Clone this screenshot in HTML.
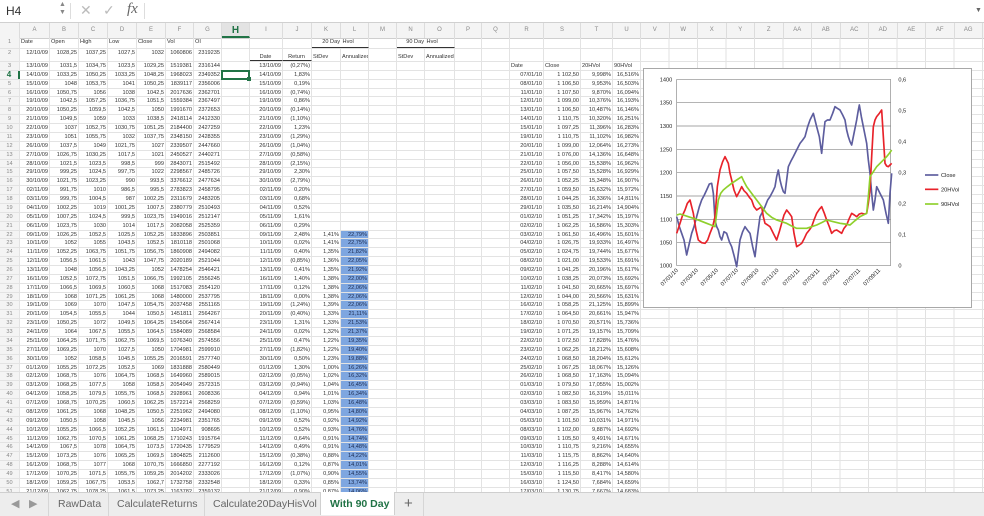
<!DOCTYPE html>
<html><head><meta charset="utf-8"><style>
*{margin:0;padding:0}
body{width:984px;height:515px;overflow:hidden;position:relative;background:#fff;font-family:"Liberation Sans",sans-serif}
.fb{position:absolute;left:0;top:0;width:984px;height:22px;background:#fff;border-bottom:1px solid #d0d0d0}
.hd{position:absolute;left:0;top:23px;width:984px;height:15px;background:#f4f4f4;border-bottom:1px solid #cfcfcf;display:flex}
.hd i{flex:none;font-style:normal;font-size:6px;color:#888;text-align:center;line-height:15px;border-right:1px solid #dcdcdc;box-sizing:border-box}
.vl{position:absolute;left:641px;top:38px;width:343px;height:454px;background:repeating-linear-gradient(to right,transparent 0 27.5px,#e1e1e1 27.5px 28.5px)}
.r{position:absolute;left:0;width:984px;height:8.87px;display:flex;border-bottom:1px solid #e3e3e3;box-sizing:border-box}
.r i{flex:none;font-style:normal;border-right:1px solid #e3e3e3;box-sizing:border-box;overflow:hidden;white-space:nowrap;text-align:right;padding-right:1px;font-size:5.6px;line-height:8px;color:#333}
.r i:first-child,.hd i:first-child{background:#f4f4f4;color:#888;text-align:center;padding:0}
.r i:nth-child(1),.hd i:nth-child(1){width:20px}
.r i:nth-child(2),.hd i:nth-child(2){width:30px}
.r i:nth-child(3),.hd i:nth-child(3),.r i:nth-child(4),.hd i:nth-child(4),.r i:nth-child(5),.hd i:nth-child(5),.r i:nth-child(6),.hd i:nth-child(6){width:29px}
.r i:nth-child(7),.hd i:nth-child(7),.r i:nth-child(8),.hd i:nth-child(8),.r i:nth-child(9),.hd i:nth-child(9){width:28px}
.r i:nth-child(10),.hd i:nth-child(10){width:33px}
.r i:nth-child(11),.hd i:nth-child(11),.r i:nth-child(12),.hd i:nth-child(12){width:29px}
.r i:nth-child(13),.hd i:nth-child(13),.r i:nth-child(14),.hd i:nth-child(14),.r i:nth-child(15),.hd i:nth-child(15){width:28px}
.r i:nth-child(16),.hd i:nth-child(16){width:30px}
.r i:nth-child(17),.hd i:nth-child(17){width:27px}
.r i:nth-child(18),.hd i:nth-child(18){width:28px}
.r i:nth-child(19),.hd i:nth-child(19){width:34px}
.r i:nth-child(20),.hd i:nth-child(20){width:37px}
.r i:nth-child(21),.hd i:nth-child(21){width:32px}
.r i:nth-child(22),.hd i:nth-child(22){width:28px}
.hd i.x{width:28.5px}
.v i:nth-child(13){background:#7ea6e0;color:#1a2a50}
.L{text-align:left!important;padding-left:1px}
.sel{position:absolute;left:221px;top:70px;width:29px;height:10px;border:2px solid #217346;box-sizing:border-box}
.tabs{position:absolute;left:0;top:492px;width:984px;height:23px;background:#ededed;border-top:1px solid #cfcfcf;font-size:10.5px;color:#666}
.tabs span{position:absolute;top:5px;white-space:nowrap}
</style></head><body>
<div class="fb">
<span style="position:absolute;left:6px;top:4px;font-size:12px;color:#333">H4</span>
<span style="position:absolute;left:59px;top:1px;font-size:7px;color:#888;line-height:8px">▲<br>▼</span>
<span style="position:absolute;left:70px;top:3px;width:1px;height:16px;background:#ddd"></span>
<span style="position:absolute;left:80px;top:2px;font-size:14px;color:#bbb">✕</span>
<span style="position:absolute;left:103px;top:2px;font-size:14px;color:#bbb">✓</span>
<span style="position:absolute;left:127px;top:1px;font-size:15px;color:#666;font-family:'Liberation Serif',serif;font-style:italic">fx</span>
<span style="position:absolute;left:144px;top:3px;width:1px;height:16px;background:#ddd"></span>
<span style="position:absolute;left:975px;top:7px;font-size:7px;color:#666">▼</span>
</div>
<div class="hd"><i></i><i>A</i><i>B</i><i>C</i><i>D</i><i>E</i><i>F</i><i>G</i><i style="color:#217346;font-weight:bold;font-size:10px;background:#e3e3e3;border-bottom:2px solid #217346">H</i><i>I</i><i>J</i><i>K</i><i>L</i><i>M</i><i>N</i><i>O</i><i>P</i><i>Q</i><i>R</i><i>S</i><i>T</i><i>U</i><i class="x">V</i><i class="x">W</i><i class="x">X</i><i class="x">Y</i><i class="x">Z</i><i class="x">AA</i><i class="x">AB</i><i class="x">AC</i><i class="x">AD</i><i class="x">AE</i><i class="x">AF</i><i class="x">AG</i></div>
<div class="vl"></div>

<div class="r" style="top:38px;height:11px"><i>1</i><i class="L">Date</i><i class="L">Open</i><i class="L">High</i><i class="L">Low</i><i class="L">Close</i><i class="L">Vol</i><i class="L">OI</i><i></i><i></i><i></i><i style="text-align:right;overflow:visible;border-right:none;border-bottom:1px solid #333">20 Day</i><i style="text-align:left;border-bottom:1px solid #333">&nbsp;Hvol</i><i></i><i style="text-align:right;overflow:visible;border-right:none;border-bottom:1px solid #333">90 Day</i><i style="text-align:left;border-bottom:1px solid #333">&nbsp;Hvol</i><i></i><i></i><i></i><i></i><i></i><i></i></div>
<div class="r" style="top:49px;height:13px"><i>2</i><i>12/10/09</i><i>1028,25</i><i>1037,25</i><i>1027,5</i><i>1032</i><i>1060806</i><i>2319235</i><i></i><i style="text-align:center;border-bottom:1px solid #333;line-height:16px">Date</i><i style="text-align:center;border-bottom:1px solid #333;line-height:16px">Return</i><i class="L" style="line-height:16px">StDev</i><i class="L" style="line-height:16px">Annualized</i><i></i><i class="L" style="line-height:16px">StDev</i><i class="L" style="line-height:16px">Annualized</i><i></i><i></i><i></i><i></i><i></i><i></i></div>
<div class="r" style="top:62px"><i>3</i><i>13/10/09</i><i>1031,5</i><i>1034,75</i><i>1023,5</i><i>1029,25</i><i>1519381</i><i>2316144</i><i></i><i>13/10/09</i><i>(0,27%)</i><i></i><i></i><i></i><i></i><i></i><i></i><i></i><i class="L">Date</i><i class="L">Close</i><i class="L">20HVol</i><i class="L">90HVol</i></div>
<div class="r" style="top:70.87px"><i style="color:#217346;font-weight:bold;font-size:8px;border-right:2px solid #217346">4</i><i>14/10/09</i><i>1033,25</i><i>1050,25</i><i>1033,25</i><i>1048,25</i><i>1968023</i><i>2349352</i><i></i><i>14/10/09</i><i>1,83%</i><i></i><i></i><i></i><i></i><i></i><i></i><i></i><i>07/01/10</i><i>1 102,50</i><i>9,998%</i><i>16,516%</i></div>
<div class="r" style="top:79.74px"><i>5</i><i>15/10/09</i><i>1048</i><i>1053,75</i><i>1041</i><i>1050,25</i><i>1839117</i><i>2356006</i><i></i><i>15/10/09</i><i>0,19%</i><i></i><i></i><i></i><i></i><i></i><i></i><i></i><i>08/01/10</i><i>1 106,50</i><i>9,953%</i><i>16,503%</i></div>
<div class="r" style="top:88.61px"><i>6</i><i>16/10/09</i><i>1050,75</i><i>1056</i><i>1038</i><i>1042,5</i><i>2017636</i><i>2362701</i><i></i><i>16/10/09</i><i>(0,74%)</i><i></i><i></i><i></i><i></i><i></i><i></i><i></i><i>11/01/10</i><i>1 107,50</i><i>9,870%</i><i>16,094%</i></div>
<div class="r" style="top:97.48px"><i>7</i><i>19/10/09</i><i>1042,5</i><i>1057,25</i><i>1036,75</i><i>1051,5</i><i>1559384</i><i>2367497</i><i></i><i>19/10/09</i><i>0,86%</i><i></i><i></i><i></i><i></i><i></i><i></i><i></i><i>12/01/10</i><i>1 099,00</i><i>10,376%</i><i>16,193%</i></div>
<div class="r" style="top:106.35px"><i>8</i><i>20/10/09</i><i>1050,25</i><i>1059,5</i><i>1042,5</i><i>1050</i><i>1991670</i><i>2372653</i><i></i><i>20/10/09</i><i>(0,14%)</i><i></i><i></i><i></i><i></i><i></i><i></i><i></i><i>13/01/10</i><i>1 106,50</i><i>10,487%</i><i>16,146%</i></div>
<div class="r" style="top:115.22px"><i>9</i><i>21/10/09</i><i>1049,5</i><i>1059</i><i>1033</i><i>1038,5</i><i>2418114</i><i>2412330</i><i></i><i>21/10/09</i><i>(1,10%)</i><i></i><i></i><i></i><i></i><i></i><i></i><i></i><i>14/01/10</i><i>1 110,75</i><i>10,320%</i><i>16,251%</i></div>
<div class="r" style="top:124.09px"><i>10</i><i>22/10/09</i><i>1037</i><i>1052,75</i><i>1030,75</i><i>1051,25</i><i>2184400</i><i>2427259</i><i></i><i>22/10/09</i><i>1,23%</i><i></i><i></i><i></i><i></i><i></i><i></i><i></i><i>15/01/10</i><i>1 097,25</i><i>11,396%</i><i>16,283%</i></div>
<div class="r" style="top:132.96px"><i>11</i><i>23/10/09</i><i>1051</i><i>1055,75</i><i>1032</i><i>1037,75</i><i>2348150</i><i>2428355</i><i></i><i>23/10/09</i><i>(1,29%)</i><i></i><i></i><i></i><i></i><i></i><i></i><i></i><i>19/01/10</i><i>1 110,75</i><i>11,102%</i><i>16,982%</i></div>
<div class="r" style="top:141.83px"><i>12</i><i>26/10/09</i><i>1037,5</i><i>1049</i><i>1021,75</i><i>1027</i><i>2339507</i><i>2447660</i><i></i><i>26/10/09</i><i>(1,04%)</i><i></i><i></i><i></i><i></i><i></i><i></i><i></i><i>20/01/10</i><i>1 099,00</i><i>12,064%</i><i>16,273%</i></div>
<div class="r" style="top:150.70px"><i>13</i><i>27/10/09</i><i>1026,75</i><i>1030,25</i><i>1017,5</i><i>1021</i><i>2450527</i><i>2440271</i><i></i><i>27/10/09</i><i>(0,58%)</i><i></i><i></i><i></i><i></i><i></i><i></i><i></i><i>21/01/10</i><i>1 076,00</i><i>14,136%</i><i>16,648%</i></div>
<div class="r" style="top:159.57px"><i>14</i><i>28/10/09</i><i>1021,5</i><i>1023,5</i><i>998,5</i><i>999</i><i>2843071</i><i>2515492</i><i></i><i>28/10/09</i><i>(2,15%)</i><i></i><i></i><i></i><i></i><i></i><i></i><i></i><i>22/01/10</i><i>1 056,00</i><i>15,538%</i><i>16,962%</i></div>
<div class="r" style="top:168.44px"><i>15</i><i>29/10/09</i><i>999,25</i><i>1024,5</i><i>997,75</i><i>1022</i><i>2298567</i><i>2485726</i><i></i><i>29/10/09</i><i>2,30%</i><i></i><i></i><i></i><i></i><i></i><i></i><i></i><i>25/01/10</i><i>1 057,50</i><i>15,528%</i><i>16,929%</i></div>
<div class="r" style="top:177.31px"><i>16</i><i>30/10/09</i><i>1021,75</i><i>1023,25</i><i>990</i><i>993,5</i><i>3376612</i><i>2477634</i><i></i><i>30/10/09</i><i>(2,79%)</i><i></i><i></i><i></i><i></i><i></i><i></i><i></i><i>26/01/10</i><i>1 052,25</i><i>15,348%</i><i>16,907%</i></div>
<div class="r" style="top:186.18px"><i>17</i><i>02/11/09</i><i>991,75</i><i>1010</i><i>986,5</i><i>995,5</i><i>2783823</i><i>2458795</i><i></i><i>02/11/09</i><i>0,20%</i><i></i><i></i><i></i><i></i><i></i><i></i><i></i><i>27/01/10</i><i>1 059,50</i><i>15,632%</i><i>15,972%</i></div>
<div class="r" style="top:195.05px"><i>18</i><i>03/11/09</i><i>999,75</i><i>1004,5</i><i>987</i><i>1002,25</i><i>2311679</i><i>2483205</i><i></i><i>03/11/09</i><i>0,68%</i><i></i><i></i><i></i><i></i><i></i><i></i><i></i><i>28/01/10</i><i>1 044,25</i><i>16,336%</i><i>14,811%</i></div>
<div class="r" style="top:203.92px"><i>19</i><i>04/11/09</i><i>1002,25</i><i>1019</i><i>1001,25</i><i>1007,5</i><i>2380779</i><i>2510493</i><i></i><i>04/11/09</i><i>0,52%</i><i></i><i></i><i></i><i></i><i></i><i></i><i></i><i>29/01/10</i><i>1 035,50</i><i>16,214%</i><i>14,904%</i></div>
<div class="r" style="top:212.79px"><i>20</i><i>05/11/09</i><i>1007,25</i><i>1024,5</i><i>999,5</i><i>1023,75</i><i>1949016</i><i>2512147</i><i></i><i>05/11/09</i><i>1,61%</i><i></i><i></i><i></i><i></i><i></i><i></i><i></i><i>01/02/10</i><i>1 051,25</i><i>17,342%</i><i>15,197%</i></div>
<div class="r" style="top:221.66px"><i>21</i><i>06/11/09</i><i>1023,75</i><i>1030</i><i>1014</i><i>1017,5</i><i>2082058</i><i>2525359</i><i></i><i>06/11/09</i><i>0,29%</i><i></i><i></i><i></i><i></i><i></i><i></i><i></i><i>02/02/10</i><i>1 062,25</i><i>16,586%</i><i>15,303%</i></div>
<div class="r v" style="top:230.53px"><i>22</i><i>09/11/09</i><i>1026,25</i><i>1052,5</i><i>1025,5</i><i>1052,25</i><i>1833896</i><i>2503851</i><i></i><i>09/11/09</i><i>2,48%</i><i>1,41%</i><i>22,79%</i><i></i><i></i><i></i><i></i><i></i><i>03/02/10</i><i>1 061,50</i><i>16,496%</i><i>15,601%</i></div>
<div class="r v" style="top:239.40px"><i>23</i><i>10/11/09</i><i>1052</i><i>1055</i><i>1043,5</i><i>1052,5</i><i>1810118</i><i>2501068</i><i></i><i>10/11/09</i><i>0,02%</i><i>1,41%</i><i>22,75%</i><i></i><i></i><i></i><i></i><i></i><i>04/02/10</i><i>1 026,75</i><i>19,933%</i><i>16,497%</i></div>
<div class="r v" style="top:248.27px"><i>24</i><i>11/11/09</i><i>1052,25</i><i>1063,75</i><i>1051,75</i><i>1056,75</i><i>1860908</i><i>2494082</i><i></i><i>11/11/09</i><i>0,40%</i><i>1,35%</i><i>21,82%</i><i></i><i></i><i></i><i></i><i></i><i>05/02/10</i><i>1 024,75</i><i>19,744%</i><i>15,677%</i></div>
<div class="r v" style="top:257.14px"><i>25</i><i>12/11/09</i><i>1056,5</i><i>1061,5</i><i>1043</i><i>1047,75</i><i>2020189</i><i>2521044</i><i></i><i>12/11/09</i><i>(0,85%)</i><i>1,36%</i><i>22,05%</i><i></i><i></i><i></i><i></i><i></i><i>08/02/10</i><i>1 021,00</i><i>19,533%</i><i>15,691%</i></div>
<div class="r v" style="top:266.01px"><i>26</i><i>13/11/09</i><i>1048</i><i>1056,5</i><i>1043,25</i><i>1052</i><i>1478254</i><i>2546421</i><i></i><i>13/11/09</i><i>0,41%</i><i>1,35%</i><i>21,92%</i><i></i><i></i><i></i><i></i><i></i><i>09/02/10</i><i>1 041,25</i><i>20,196%</i><i>15,617%</i></div>
<div class="r v" style="top:274.88px"><i>27</i><i>16/11/09</i><i>1052,5</i><i>1072,75</i><i>1051,5</i><i>1066,75</i><i>1992105</i><i>2556245</i><i></i><i>16/11/09</i><i>1,40%</i><i>1,38%</i><i>22,00%</i><i></i><i></i><i></i><i></i><i></i><i>10/02/10</i><i>1 038,25</i><i>20,073%</i><i>15,692%</i></div>
<div class="r v" style="top:283.75px"><i>28</i><i>17/11/09</i><i>1066,5</i><i>1069,5</i><i>1060,5</i><i>1068</i><i>1517083</i><i>2554120</i><i></i><i>17/11/09</i><i>0,12%</i><i>1,38%</i><i>22,06%</i><i></i><i></i><i></i><i></i><i></i><i>11/02/10</i><i>1 041,50</i><i>20,665%</i><i>15,697%</i></div>
<div class="r v" style="top:292.62px"><i>29</i><i>18/11/09</i><i>1068</i><i>1071,25</i><i>1061,25</i><i>1068</i><i>1480000</i><i>2537795</i><i></i><i>18/11/09</i><i>0,00%</i><i>1,38%</i><i>22,06%</i><i></i><i></i><i></i><i></i><i></i><i>12/02/10</i><i>1 044,00</i><i>20,566%</i><i>15,631%</i></div>
<div class="r v" style="top:301.49px"><i>30</i><i>19/11/09</i><i>1069</i><i>1070</i><i>1047,5</i><i>1054,75</i><i>2037458</i><i>2551165</i><i></i><i>19/11/09</i><i>(1,24%)</i><i>1,39%</i><i>22,06%</i><i></i><i></i><i></i><i></i><i></i><i>16/02/10</i><i>1 058,25</i><i>21,125%</i><i>15,899%</i></div>
<div class="r v" style="top:310.36px"><i>31</i><i>20/11/09</i><i>1054,5</i><i>1055,5</i><i>1044</i><i>1050,5</i><i>1451811</i><i>2564267</i><i></i><i>20/11/09</i><i>(0,40%)</i><i>1,33%</i><i>21,11%</i><i></i><i></i><i></i><i></i><i></i><i>17/02/10</i><i>1 064,50</i><i>20,661%</i><i>15,947%</i></div>
<div class="r v" style="top:319.23px"><i>32</i><i>23/11/09</i><i>1050,25</i><i>1072</i><i>1049,5</i><i>1064,25</i><i>1545064</i><i>2567414</i><i></i><i>23/11/09</i><i>1,31%</i><i>1,33%</i><i>21,53%</i><i></i><i></i><i></i><i></i><i></i><i>18/02/10</i><i>1 070,50</i><i>20,571%</i><i>15,736%</i></div>
<div class="r v" style="top:328.10px"><i>33</i><i>24/11/09</i><i>1064</i><i>1067,5</i><i>1055,5</i><i>1064,5</i><i>1584089</i><i>2568584</i><i></i><i>24/11/09</i><i>0,02%</i><i>1,32%</i><i>21,37%</i><i></i><i></i><i></i><i></i><i></i><i>19/02/10</i><i>1 071,25</i><i>19,157%</i><i>15,709%</i></div>
<div class="r v" style="top:336.97px"><i>34</i><i>25/11/09</i><i>1064,25</i><i>1071,75</i><i>1062,75</i><i>1069,5</i><i>1076340</i><i>2574556</i><i></i><i>25/11/09</i><i>0,47%</i><i>1,22%</i><i>19,35%</i><i></i><i></i><i></i><i></i><i></i><i>22/02/10</i><i>1 072,50</i><i>17,828%</i><i>15,476%</i></div>
<div class="r v" style="top:345.84px"><i>35</i><i>27/11/09</i><i>1069,25</i><i>1070</i><i>1027,5</i><i>1050</i><i>1704981</i><i>2599910</i><i></i><i>27/11/09</i><i>(1,82%)</i><i>1,22%</i><i>19,40%</i><i></i><i></i><i></i><i></i><i></i><i>23/02/10</i><i>1 062,25</i><i>18,212%</i><i>15,608%</i></div>
<div class="r v" style="top:354.71px"><i>36</i><i>30/11/09</i><i>1052</i><i>1058,5</i><i>1045,5</i><i>1055,25</i><i>2016591</i><i>2577740</i><i></i><i>30/11/09</i><i>0,50%</i><i>1,23%</i><i>19,88%</i><i></i><i></i><i></i><i></i><i></i><i>24/02/10</i><i>1 068,50</i><i>18,204%</i><i>15,612%</i></div>
<div class="r v" style="top:363.58px"><i>37</i><i>01/12/09</i><i>1055,25</i><i>1072,25</i><i>1052,5</i><i>1069</i><i>1831888</i><i>2580449</i><i></i><i>01/12/09</i><i>1,30%</i><i>1,00%</i><i>16,26%</i><i></i><i></i><i></i><i></i><i></i><i>25/02/10</i><i>1 067,25</i><i>18,067%</i><i>15,126%</i></div>
<div class="r v" style="top:372.45px"><i>38</i><i>02/12/09</i><i>1068,75</i><i>1076</i><i>1064,75</i><i>1068,5</i><i>1649960</i><i>2589015</i><i></i><i>02/12/09</i><i>(0,05%)</i><i>1,02%</i><i>16,32%</i><i></i><i></i><i></i><i></i><i></i><i>26/02/10</i><i>1 068,50</i><i>17,163%</i><i>15,094%</i></div>
<div class="r v" style="top:381.32px"><i>39</i><i>03/12/09</i><i>1068,25</i><i>1077,5</i><i>1058</i><i>1058,5</i><i>2054949</i><i>2572315</i><i></i><i>03/12/09</i><i>(0,94%)</i><i>1,04%</i><i>16,45%</i><i></i><i></i><i></i><i></i><i></i><i>01/03/10</i><i>1 079,50</i><i>17,055%</i><i>15,002%</i></div>
<div class="r v" style="top:390.19px"><i>40</i><i>04/12/09</i><i>1058,25</i><i>1079,5</i><i>1055,75</i><i>1068,5</i><i>2928961</i><i>2608336</i><i></i><i>04/12/09</i><i>0,94%</i><i>1,01%</i><i>16,34%</i><i></i><i></i><i></i><i></i><i></i><i>02/03/10</i><i>1 082,50</i><i>16,319%</i><i>15,011%</i></div>
<div class="r v" style="top:399.06px"><i>41</i><i>07/12/09</i><i>1068,75</i><i>1070,25</i><i>1060,5</i><i>1062,25</i><i>1572214</i><i>2568259</i><i></i><i>07/12/09</i><i>(0,59%)</i><i>1,03%</i><i>16,48%</i><i></i><i></i><i></i><i></i><i></i><i>03/03/10</i><i>1 083,50</i><i>15,959%</i><i>14,871%</i></div>
<div class="r v" style="top:407.93px"><i>42</i><i>08/12/09</i><i>1061,25</i><i>1068</i><i>1048,25</i><i>1050,5</i><i>2251962</i><i>2494080</i><i></i><i>08/12/09</i><i>(1,10%)</i><i>0,95%</i><i>14,80%</i><i></i><i></i><i></i><i></i><i></i><i>04/03/10</i><i>1 087,25</i><i>15,967%</i><i>14,762%</i></div>
<div class="r v" style="top:416.80px"><i>43</i><i>09/12/09</i><i>1050,5</i><i>1058</i><i>1045,5</i><i>1056</i><i>2234981</i><i>2351765</i><i></i><i>09/12/09</i><i>0,52%</i><i>0,92%</i><i>14,92%</i><i></i><i></i><i></i><i></i><i></i><i>05/03/10</i><i>1 101,50</i><i>10,031%</i><i>14,971%</i></div>
<div class="r v" style="top:425.67px"><i>44</i><i>10/12/09</i><i>1055,25</i><i>1066,5</i><i>1052,25</i><i>1061,5</i><i>1104971</i><i>908695</i><i></i><i>10/12/09</i><i>0,52%</i><i>0,93%</i><i>14,76%</i><i></i><i></i><i></i><i></i><i></i><i>08/03/10</i><i>1 102,00</i><i>9,887%</i><i>14,692%</i></div>
<div class="r v" style="top:434.54px"><i>45</i><i>11/12/09</i><i>1062,75</i><i>1070,5</i><i>1061,25</i><i>1068,25</i><i>1710243</i><i>1915764</i><i></i><i>11/12/09</i><i>0,64%</i><i>0,91%</i><i>14,74%</i><i></i><i></i><i></i><i></i><i></i><i>09/03/10</i><i>1 105,50</i><i>9,491%</i><i>14,671%</i></div>
<div class="r v" style="top:443.41px"><i>46</i><i>14/12/09</i><i>1067,5</i><i>1078</i><i>1064,75</i><i>1073,5</i><i>1720435</i><i>1779529</i><i></i><i>14/12/09</i><i>0,49%</i><i>0,91%</i><i>14,48%</i><i></i><i></i><i></i><i></i><i></i><i>10/03/10</i><i>1 110,75</i><i>9,216%</i><i>14,655%</i></div>
<div class="r v" style="top:452.28px"><i>47</i><i>15/12/09</i><i>1073,25</i><i>1076</i><i>1065,25</i><i>1069,5</i><i>1804825</i><i>2112600</i><i></i><i>15/12/09</i><i>(0,38%)</i><i>0,88%</i><i>14,22%</i><i></i><i></i><i></i><i></i><i></i><i>11/03/10</i><i>1 115,75</i><i>8,862%</i><i>14,640%</i></div>
<div class="r v" style="top:461.15px"><i>48</i><i>16/12/09</i><i>1068,75</i><i>1077</i><i>1068</i><i>1070,75</i><i>1666850</i><i>2277192</i><i></i><i>16/12/09</i><i>0,12%</i><i>0,87%</i><i>14,01%</i><i></i><i></i><i></i><i></i><i></i><i>12/03/10</i><i>1 116,25</i><i>8,288%</i><i>14,614%</i></div>
<div class="r v" style="top:470.02px"><i>49</i><i>17/12/09</i><i>1070,25</i><i>1071,5</i><i>1055,75</i><i>1059,25</i><i>2014202</i><i>2333026</i><i></i><i>17/12/09</i><i>(1,07%)</i><i>0,90%</i><i>14,55%</i><i></i><i></i><i></i><i></i><i></i><i>15/03/10</i><i>1 115,50</i><i>8,417%</i><i>14,580%</i></div>
<div class="r v" style="top:478.89px"><i>50</i><i>18/12/09</i><i>1059,25</i><i>1067,75</i><i>1053,5</i><i>1062,7</i><i>1732758</i><i>2332548</i><i></i><i>18/12/09</i><i>0,33%</i><i>0,85%</i><i>13,74%</i><i></i><i></i><i></i><i></i><i></i><i>16/03/10</i><i>1 124,50</i><i>7,684%</i><i>14,659%</i></div>
<div class="r v" style="top:487.76px"><i>51</i><i>21/12/09</i><i>1062,75</i><i>1078,25</i><i>1061,5</i><i>1073,25</i><i>1163782</i><i>2359132</i><i></i><i>21/12/09</i><i>0,90%</i><i>0,87%</i><i>14,06%</i><i></i><i></i><i></i><i></i><i></i><i>17/03/10</i><i>1 130,75</i><i>7,667%</i><i>14,683%</i></div>

<div class="sel"><span style="position:absolute;right:-3px;bottom:-3px;width:4px;height:4px;background:#217346"></span></div>

<div style="position:absolute;left:643px;top:68px;width:329px;height:240px;background:#fff;border:1px solid #a8a8a8;box-sizing:border-box"></div>
<svg style="position:absolute;left:640px;top:60px" width="344" height="260" viewBox="0 0 1032 780" font-family="Liberation Sans, sans-serif" font-size="17" fill="#222">
<g stroke="#888" stroke-width="2">
<line x1="110" y1="58" x2="752" y2="58"/><line x1="110" y1="128" x2="752" y2="128"/><line x1="110" y1="198" x2="752" y2="198"/><line x1="110" y1="268" x2="752" y2="268"/><line x1="110" y1="338" x2="752" y2="338"/><line x1="110" y1="408" x2="752" y2="408"/><line x1="110" y1="478" x2="752" y2="478"/><line x1="110" y1="548" x2="752" y2="548"/><line x1="110" y1="617" x2="752" y2="617"/>
<line x1="110" y1="58" x2="110" y2="617"/><line x1="752" y1="58" x2="752" y2="617"/>
</g>
<g text-anchor="end"><text x="97" y="64">1400</text><text x="97" y="134">1350</text><text x="97" y="204">1300</text><text x="97" y="274">1250</text><text x="97" y="344">1200</text><text x="97" y="414">1150</text><text x="97" y="484">1100</text><text x="97" y="554">1050</text><text x="97" y="623">1000</text></g>
<g><text x="775" y="64">0,6</text><text x="775" y="157">0,5</text><text x="775" y="250">0,4</text><text x="775" y="344">0,3</text><text x="775" y="437">0,2</text><text x="775" y="530">0,1</text><text x="775" y="623">0</text></g>
<g text-anchor="end">
<text transform="translate(115,632) rotate(-45)">07/01/10</text><text transform="translate(175,632) rotate(-45)">07/03/10</text><text transform="translate(235,632) rotate(-45)">07/05/10</text><text transform="translate(295,632) rotate(-45)">07/07/10</text><text transform="translate(357,632) rotate(-45)">07/09/10</text><text transform="translate(417,632) rotate(-45)">07/11/10</text><text transform="translate(480,632) rotate(-45)">07/01/11</text><text transform="translate(540,632) rotate(-45)">07/03/11</text><text transform="translate(600,632) rotate(-45)">07/05/11</text><text transform="translate(662,632) rotate(-45)">07/07/11</text><text transform="translate(722,632) rotate(-45)">07/09/11</text>
</g>
<g fill="none" stroke-width="5" stroke-linejoin="round">
<polyline stroke="#5d5d9e" points="110,470 118,500 125,520 132,540 140,585 148,550 155,520 162,500 170,470 178,440 185,420 193,405 200,390 208,372 215,370 220,400 225,480 230,500 235,510 240,530 245,540 252,515 260,520 268,545 275,560 283,590 290,620 295,580 300,540 308,515 315,500 322,510 330,520 338,560 345,590 352,530 360,470 368,455 375,440 383,420 390,410 398,395 405,380 410,350 415,330 420,360 425,380 430,395 435,400 440,360 445,320 452,305 460,290 470,270 480,250 488,240 495,230 503,200 510,180 515,170 520,160 525,180 530,200 538,230 545,280 550,230 555,185 562,180 570,180 578,160 585,140 592,145 600,150 608,165 615,180 620,210 625,230 630,245 635,255 642,220 650,180 655,150 658,135 664,170 670,200 675,225 680,250 685,300 690,340 695,400 700,450 705,420 710,380 715,390 720,400 725,410 730,420 738,460 745,490 750,400 755,340"/>
<polyline stroke="#e8222a" points="110,520 115,505 120,490 128,465 135,450 142,430 150,420 155,440 160,460 168,510 175,540 185,548 195,550 203,540 210,520 218,500 225,470 229,420 232,380 236,355 240,330 248,305 255,290 260,300 265,310 270,340 275,360 282,390 290,410 298,395 305,380 312,392 320,400 328,412 335,420 342,440 350,450 358,445 365,440 370,470 375,490 383,495 390,500 400,520 410,540 418,515 425,490 432,465 440,450 448,460 455,470 462,520 470,560 478,555 485,550 493,535 500,520 508,510 515,500 522,480 530,460 538,448 545,440 553,460 560,480 568,500 575,520 583,512 590,510 598,515 605,520 612,505 620,495 628,475 635,460 643,465 650,470 658,462 665,460 673,462 680,460 685,430 690,390 695,290 700,200 705,180 710,170 718,160 725,150 730,230 735,310 740,318 745,320 750,315 755,310"/>
<polyline stroke="#8fd02c" points="110,465 120,462 130,465 145,470 160,475 180,482 200,490 213,495 225,500 230,460 235,420 242,400 250,390 262,380 275,370 290,360 305,350 312,365 320,380 335,400 350,420 365,440 380,460 395,472 410,480 425,485 440,490 455,498 470,505 485,505 500,505 515,500 530,495 545,488 560,480 580,485 600,490 615,492 630,495 645,482 660,470 670,465 680,460 685,410 690,350 700,335 710,320 725,305 740,290 748,280 755,270"/>
</g>
<g stroke-width="5"><line x1="855" y1="345" x2="895" y2="345" stroke="#5d5d9e"/><line x1="855" y1="388" x2="895" y2="388" stroke="#e8222a"/><line x1="855" y1="432" x2="895" y2="432" stroke="#8fd02c"/></g>
<text x="903" y="351">Close</text><text x="903" y="394">20HVol</text><text x="903" y="438">90HVol</text>
</svg>

<div class="tabs">
<span style="left:11px;top:4px;color:#999;font-size:11px">◀</span>
<span style="left:29px;top:4px;color:#999;font-size:11px">▶</span>
<span style="left:48px;top:0;width:1px;height:23px;background:#d6d6d6"></span>
<span style="left:58px">RawData</span>
<span style="left:108px;top:0;width:1px;height:23px;background:#d6d6d6"></span>
<span style="left:117px">CalculateReturns</span>
<span style="left:204px;top:0;width:1px;height:23px;background:#d6d6d6"></span>
<span style="left:213px">Calculate20DayHisVol</span>
<span style="left:320px;top:-1px;width:73px;height:23px;background:#fff;border-left:1px solid #d0d0d0;border-right:1px solid #d0d0d0"></span>
<span style="left:330px;color:#217346;font-weight:bold">With 90 Day</span>
<span style="left:404px;color:#666;font-size:15px;top:2px">+</span>
<span style="left:423px;top:0;width:1px;height:23px;background:#d6d6d6"></span>
</div>
</body></html>
